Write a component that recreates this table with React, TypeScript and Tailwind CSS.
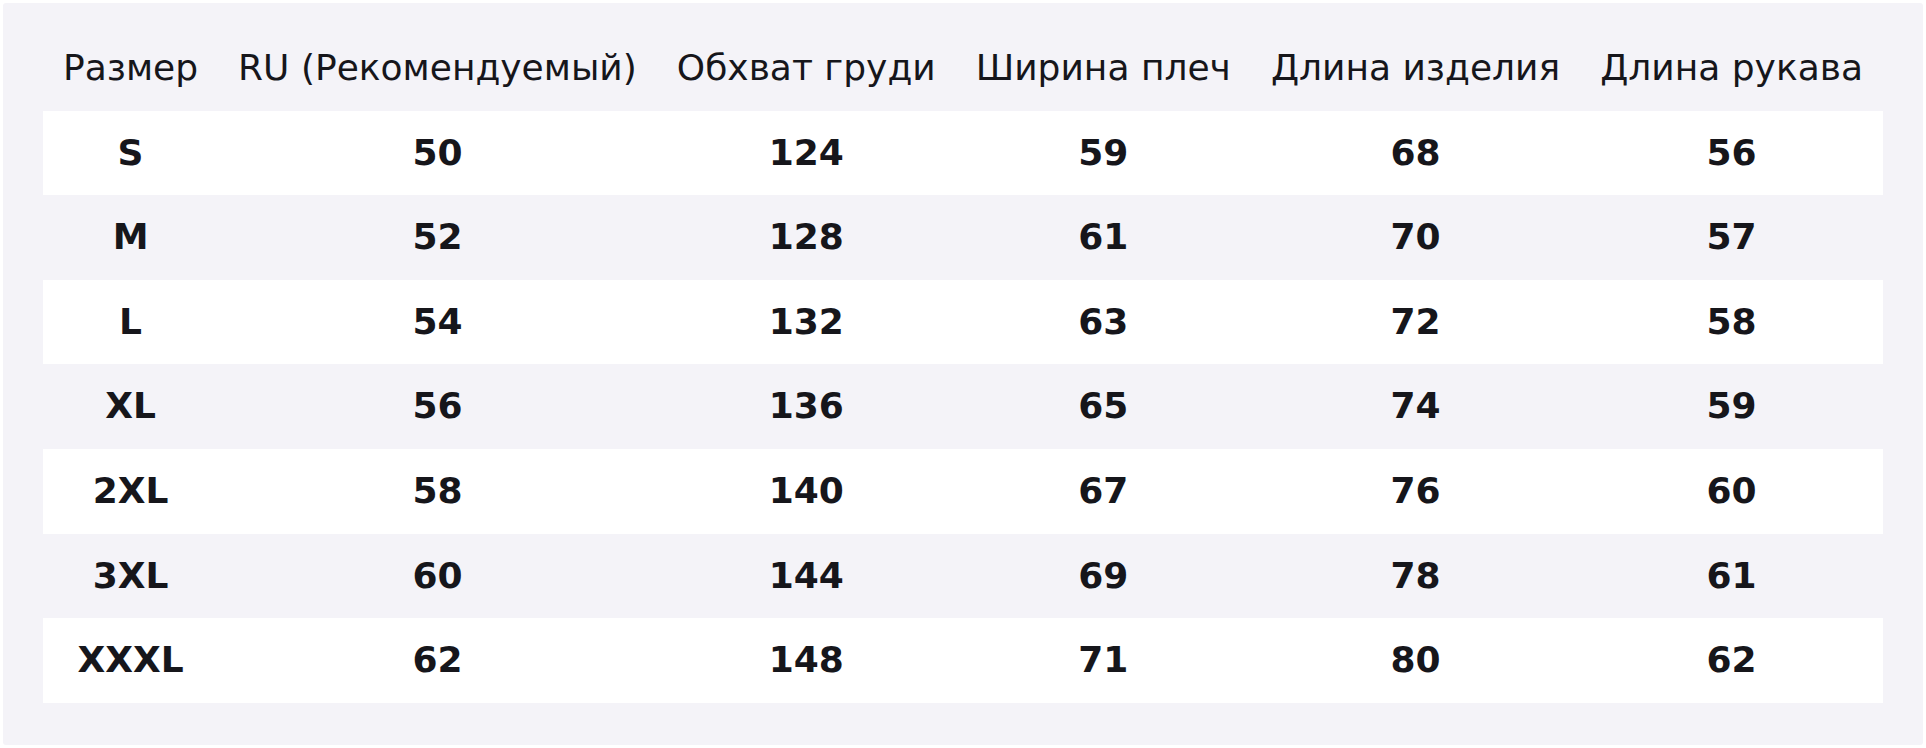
type SizeRow = {
  size: string;
  ru: number;
  chest: number;
  shoulders: number;
  length: number;
  sleeve: number;
};

const headers = [
  "Размер",
  "RU (Рекомендуемый)",
  "Обхват груди",
  "Ширина плеч",
  "Длина изделия",
  "Длина рукава",
];

const rows: SizeRow[] = [
  { size: "S", ru: 50, chest: 124, shoulders: 59, length: 68, sleeve: 56 },
  { size: "M", ru: 52, chest: 128, shoulders: 61, length: 70, sleeve: 57 },
  { size: "L", ru: 54, chest: 132, shoulders: 63, length: 72, sleeve: 58 },
  { size: "XL", ru: 56, chest: 136, shoulders: 65, length: 74, sleeve: 59 },
  { size: "2XL", ru: 58, chest: 140, shoulders: 67, length: 76, sleeve: 60 },
  { size: "3XL", ru: 60, chest: 144, shoulders: 69, length: 78, sleeve: 61 },
  { size: "XXXL", ru: 62, chest: 148, shoulders: 71, length: 80, sleeve: 62 },
];

export default function App() {
  return (
    <div className="min-h-screen bg-white p-[3px] font-['DejaVu_Sans',sans-serif] text-[#16161b]">
      <div className="rounded-[3px] bg-[#f4f3f8] px-10 pt-[23px] pb-[42px]">
        <table className="w-full border-collapse">
          <thead>
            <tr>
              {headers.map((h) => (
                <th
                  key={h}
                  className="whitespace-nowrap px-[20px] py-[21px] text-center text-[36px] font-normal leading-[42.6px]"
                >
                  {h}
                </th>
              ))}
            </tr>
          </thead>
          <tbody>
            {rows.map((r, i) => (
              <tr key={r.size} className={i % 2 === 0 ? "bg-white" : "bg-[#f4f3f8]"}>
                {[r.size, r.ru, r.chest, r.shoulders, r.length, r.sleeve].map((v, j) => (
                  <td
                    key={j}
                    className="px-[20px] py-[21px] text-center text-[36px] font-bold leading-[42.6px]"
                  >
                    {v}
                  </td>
                ))}
              </tr>
            ))}
          </tbody>
        </table>
      </div>
    </div>
  );
}
